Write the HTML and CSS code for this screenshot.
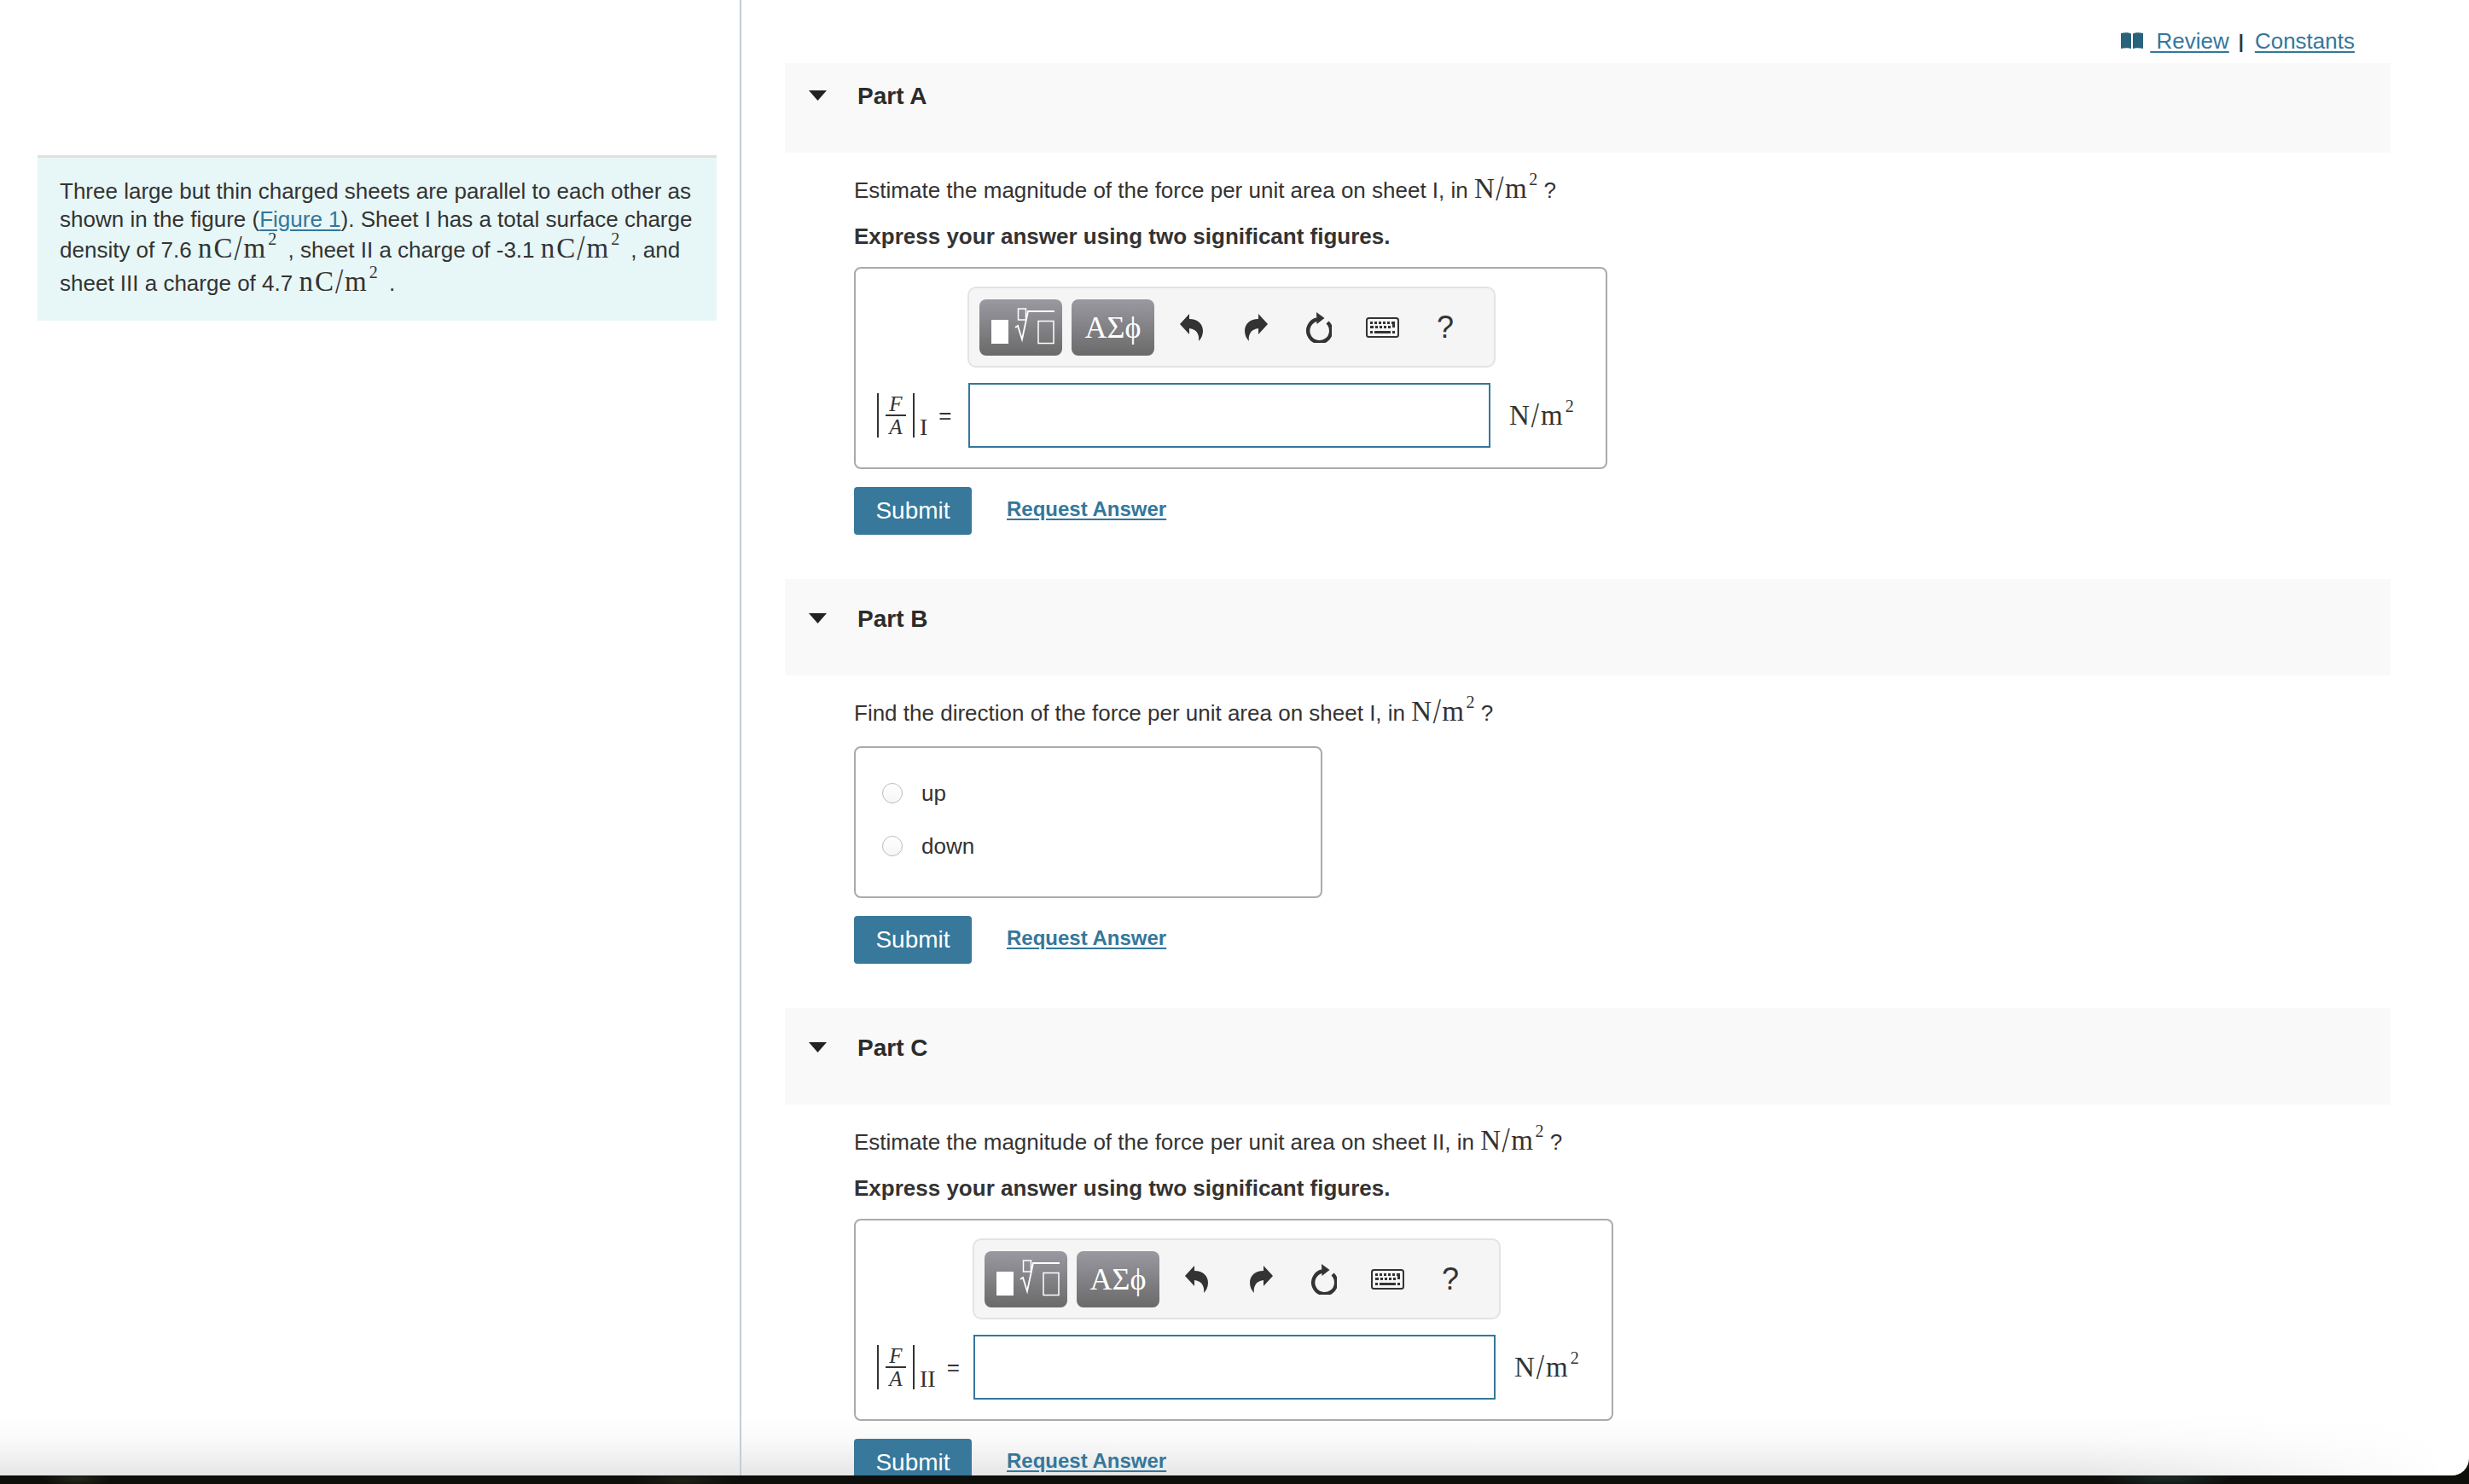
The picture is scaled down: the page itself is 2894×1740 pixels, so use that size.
FILE: index.html
```html
<!DOCTYPE html>
<html lang="en">
<head>
<meta charset="utf-8">
<title>Charged sheets</title>
<link rel="stylesheet" href="styles.css">
</head>
<body>
<svg class="defs" width="0" height="0" aria-hidden="true">
  <symbol id="i-undo" viewBox="0 0 27 32"><path d="M0 12 L11 0 V6 C21 6 27 12 27 20 C27 25 25 29 22 32 C23 26 21 18 11 17 V24 Z"/></symbol>
  <symbol id="i-redo" viewBox="0 0 27 32"><path d="M27 12 L16 0 V6 C6 6 0 12 0 20 C0 25 2 29 5 32 C4 26 6 18 16 17 V24 Z"/></symbol>
  <symbol id="i-reload" viewBox="0 0 33 36"><path d="M28 12 A13.5 13.5 0 1 1 16 8.5" fill="none" stroke="#333" stroke-width="4.4"/><path d="M15 0 L24.500 7 L15.500 14 Z"/></symbol>
  <symbol id="i-keys" viewBox="0 0 39 24">
    <rect x="1" y="1" width="37" height="22" rx="2.500" fill="none" stroke="#333" stroke-width="2"/>
    <path d="M5 5h3v3H5zM10 5h3v3h-3zM15 5h3v3h-3zM20 5h3v3h-3zM25 5h3v3h-3zM30 5h4v7h-3V8h-1zM5 10h4v3H5zM11 10h3v3h-3zM16 10h3v3h-3zM21 10h3v3h-3zM26 10h3v3h-3zM5 16h3v3H5zM10 16h19v3H10zM31 16h3v3h-3z"/>
  </symbol>
  <symbol id="i-tpl" viewBox="0 0 97 66">
    <rect x="14" y="24" width="20" height="28" fill="#fff"/>
    <rect x="45.500" y="11" width="9" height="13" fill="none" stroke="#fff" stroke-width="1.500"/>
    <path d="M42 33 L45 31 L50 47 L57 14 H88" fill="none" stroke="#fff" stroke-width="1.800"/>
    <rect x="69" y="25.500" width="18" height="26" fill="none" stroke="#fff" stroke-width="1.500"/>
  </symbol>
</svg>
<div class="window">
  <aside class="left">
    <div class="info">Three large but thin charged sheets are parallel to each other as shown in the figure (<a href="#">Figure 1</a>). Sheet I has a total surface charge density of 7.6 <span class="m">nC<span class="sl">/</span>m<sup>2</sup></span> , sheet II a charge of -3.1 <span class="m">nC<span class="sl">/</span>m<sup>2</sup></span> , and sheet III a charge of 4.7 <span class="m">nC<span class="sl">/</span>m<sup>2</sup></span> .</div>
  </aside>
  <main class="right">
    <nav class="toplinks">
      <svg class="book" width="26" height="20" viewBox="0 0 26 20"><path d="M0 1 C4 0 9 0 12 1.500 V19 C9 18 4 18 0 19 Z M14 1.500 C17 0 22 0 26 1 V19 C22 18 17 18 14 19 Z" fill="#29627a"/></svg>
      <a href="#">&nbsp;Review</a><span class="sep">|</span><a href="#">Constants</a>
    </nav>

    <section class="part part-a">
      <header class="band band-short"><span class="tri"></span><h2>Part A</h2></header>
      <div class="body">
        <p class="q">Estimate the magnitude of the force per unit area on sheet I, in <span class="m">N<span class="sl">/</span>m<sup>2</sup></span> ?</p>
        <p class="hint">Express your answer using two significant figures.</p>
        <div class="ans">
          <div class="toolbar">
            <button class="tb"><svg width="97" height="66"><use href="#i-tpl"/></svg></button>
            <button class="tb greek">ΑΣϕ</button>
            <span class="slot first"><svg width="27" height="32"><use href="#i-undo"/></svg></span>
            <span class="slot nudge"><svg width="27" height="32"><use href="#i-redo"/></svg></span>
            <span class="slot"><svg width="33" height="36"><use href="#i-reload"/></svg></span>
            <span class="slot nudge"><svg width="39" height="24"><use href="#i-keys"/></svg></span>
            <span class="slot help nudge">?</span>
          </div>
          <div class="label"><span class="bars"><span class="frac"><i class="num">F</i><i>A</i></span></span><span class="sub">I</span><span class="eq">=</span></div>
          <div class="field"></div>
          <div class="unit">N<span class="sl">/</span>m<sup>2</sup></div>
        </div>
        <div class="actions"><button class="submit">Submit</button><a class="req" href="#">Request Answer</a></div>
      </div>
    </section>

    <section class="part part-b">
      <header class="band"><span class="tri"></span><h2>Part B</h2></header>
      <div class="body">
        <p class="q">Find the direction of the force per unit area on sheet I, in <span class="m">N<span class="sl">/</span>m<sup>2</sup></span> ?</p>
        <div class="choices">
          <label class="choice"><span class="radio"></span>up</label>
          <label class="choice"><span class="radio"></span>down</label>
        </div>
        <div class="actions"><button class="submit">Submit</button><a class="req" href="#">Request Answer</a></div>
      </div>
    </section>

    <section class="part part-c">
      <header class="band"><span class="tri"></span><h2>Part C</h2></header>
      <div class="body">
        <p class="q">Estimate the magnitude of the force per unit area on sheet II, in <span class="m">N<span class="sl">/</span>m<sup>2</sup></span> ?</p>
        <p class="hint">Express your answer using two significant figures.</p>
        <div class="ans ans-wide">
          <div class="toolbar">
            <button class="tb"><svg width="97" height="66"><use href="#i-tpl"/></svg></button>
            <button class="tb greek">ΑΣϕ</button>
            <span class="slot first"><svg width="27" height="32"><use href="#i-undo"/></svg></span>
            <span class="slot nudge"><svg width="27" height="32"><use href="#i-redo"/></svg></span>
            <span class="slot"><svg width="33" height="36"><use href="#i-reload"/></svg></span>
            <span class="slot nudge"><svg width="39" height="24"><use href="#i-keys"/></svg></span>
            <span class="slot help nudge">?</span>
          </div>
          <div class="label"><span class="bars"><span class="frac"><i class="num">F</i><i>A</i></span></span><span class="sub">II</span><span class="eq">=</span></div>
          <div class="field"></div>
          <div class="unit">N<span class="sl">/</span>m<sup>2</sup></div>
        </div>
        <div class="actions"><button class="submit">Submit</button><a class="req" href="#">Request Answer</a></div>
      </div>
    </section>
  </main>
</div>
<div class="strip"></div>
</body>
</html>
```

FILE: styles.css
```css
* { box-sizing: border-box; }
html, body { margin: 0; height: 100%; }
body {
  overflow: hidden;
  background: #0e0e0b;
  font-family: "Liberation Sans", Arial, sans-serif;
  font-size: 26px;
  line-height: 33px;
  color: #333;
  display: flex;
  flex-direction: column;
}
a { color: #34779b; text-decoration: underline; text-underline-offset: 3px; }
.defs { position: absolute; }

.window {
  height: 1730px;
  flex: none;
  display: flex;
  overflow: hidden;
  border-bottom-right-radius: 20px;
  background:
    linear-gradient(to right, rgba(255,255,255,0) 84%, #fff 99%),
    linear-gradient(to bottom, #fff 1660px, #f9f9f9 1690px, #e6e6e6 1730px);
}
.strip {
  flex: 1;
  background:
    radial-gradient(ellipse 40px 10px at 90px 4px, #23281a, transparent),
    radial-gradient(ellipse 60px 10px at 800px 6px, #1f2017, transparent),
    radial-gradient(ellipse 80px 12px at 2540px 3px, #1c2a28, transparent),
    #0e0e0b;
}

/* left panel */
.left {
  width: 869px;
  flex: none;
  padding: 182px 27px 0 44px;
  border-right: 2px solid #c4ccd6;
}
.info {
  height: 194px;
  background: #e7f6f6;
  border-top: 3px solid #e0e0e0;
  padding: 23px 26px 0;
}
.info .m { margin-right: 6px; letter-spacing: 2px; }

/* math */
.m, .unit { font-family: "Liberation Serif", "Times New Roman", serif; }
.m {
  display: inline-block;
  font-size: 33px;
  line-height: 35px;
  padding-bottom: 4px;
  letter-spacing: 1.500px;
}
.sl { display: inline-block; transform: scaleY(1.3); }
sup { font-size: 20px; line-height: 0; vertical-align: 15px; letter-spacing: 0; margin-left: 1px; }

/* right column */
.right {
  flex: 1;
  padding: 0 92px 0 51px;
  min-width: 0;
}
.toplinks {
  height: 74px;
  padding: 32px 42px 0 0;
  display: flex;
  justify-content: flex-end;
  align-items: flex-start;
}
.book { margin: 6px 8px 0 0; }
.sep { margin: 0 13px 0 11px; color: #333; font-size: 22px; font-weight: bold; }

.part { margin-bottom: 52px; }
.band {
  height: 113px;
  background: #f9f9f9;
  display: flex;
  align-items: flex-start;
  padding: 32px 0 0 28px;
}
.band-short { height: 105px; padding-top: 24px; }
.band h2 {
  margin: 0 0 0 36px;
  font-size: 28px;
  line-height: 30px;
  font-weight: bold;
  color: #2b2b2b;
}
.tri {
  margin-top: 8px;
  width: 21px;
  height: 12px;
  background: #222;
  clip-path: polygon(0 0, 100% 0, 50% 100%);
}
.body { padding: 25px 0 0 81px; }
.q { margin: 0; }
.hint { margin: 18px 0 0; font-weight: bold; }

/* answer box */
.ans {
  margin-top: 19px;
  width: 883px;
  height: 237px;
  border: 2px solid #aaa;
  border-radius: 8px;
  padding: 21px 0 0 23px;
  display: grid;
  grid-template-columns: 109px 612px 1fr;
  grid-template-rows: 95px 76px;
  row-gap: 18px;
}
.ans-wide { width: 890px; grid-template-columns: 115px 612px 1fr; }
.toolbar {
  grid-column: 2 / 4;
  width: 619px;
  height: 95px;
  margin-left: -1px;
  background: #f5f5f5;
  border: 2px solid #e3e3e3;
  border-radius: 10px;
  display: flex;
  align-items: center;
  padding-left: 12px;
  gap: 0;
}
.tb {
  width: 97px;
  height: 66px;
  padding: 0;
  margin-right: 11px;
  border: 0;
  border-radius: 8px;
  background: linear-gradient(#9a99a1, #6a6a6a);
  color: #fff;
  display: block;
}
.tb svg { display: block; }
.greek { font: 36px/62px "Liberation Serif", serif; }
.slot { width: 74px; display: flex; justify-content: center; fill: #333; flex: none; }
.slot.first { margin-left: -5px; }
.slot.nudge { padding-left: 4px; }
.help { font-size: 36px; line-height: 40px; color: #333; }

.label { display: flex; align-items: center; font-family: "Liberation Serif", serif; padding-left: 2px; }
.bars {
  display: block;
  border-left: 2px solid #333;
  border-right: 2px solid #333;
  padding: 0 8px;
  height: 52px;
}
.frac { display: flex; flex-direction: column; width: 24px; text-align: center; font-size: 25px; line-height: 25px; }
.frac i { display: block; }
.num { border-bottom: 2px solid #333; }
.sub { font-size: 28px; line-height: 26px; align-self: flex-end; margin: 0 0 11px 6px; }
.eq { font-family: "Liberation Sans", sans-serif; font-size: 26px; margin-left: 13px; }
.field { border: 2px solid #34779b; background: #fff; }
.unit { font-size: 33px; line-height: 76px; padding-left: 22px; letter-spacing: 2px; }

/* choices */
.choices {
  margin-top: 19px;
  width: 549px;
  height: 178px;
  border: 2px solid #aaa;
  border-radius: 8px;
  padding: 22px 0 0 31px;
}
.choice { display: flex; align-items: center; height: 62px; }
.radio {
  width: 24px;
  height: 24px;
  margin-right: 22px;
  border-radius: 50%;
  border: 1.500px solid #bbb;
  background: linear-gradient(#fff, #f6f6f6);
}

/* actions */
.actions { margin-top: 21px; display: flex; align-items: flex-start; gap: 41px; }
.submit {
  width: 138px;
  height: 56px;
  padding: 0;
  border: 0;
  border-radius: 4px;
  background: #37789b;
  color: #fff;
  font: 28px/56px "Liberation Sans", sans-serif;
}
.req { margin-top: 9px; font-size: 24px; font-weight: bold; }
```
